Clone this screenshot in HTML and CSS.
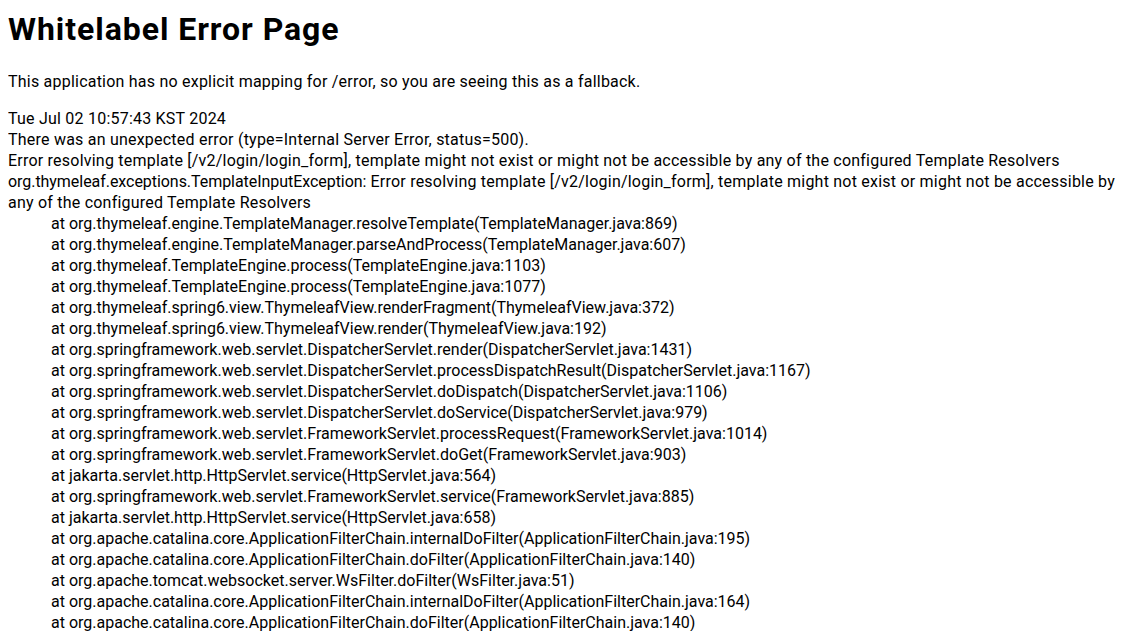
FILE: index.html
```html
<!DOCTYPE html>
<html>
<head>
<meta charset="utf-8">
<title>Whitelabel Error Page</title>
<link rel="stylesheet" href="styles.css">
</head>
<body>
<h1 class="title">Whitelabel Error Page</h1>
<p class="intro">This application has no explicit mapping for /error, so you are seeing this as a fallback.</p>
<div class="line" id="created">Tue Jul 02 10:57:43 KST 2024</div>
<div class="line">There was an unexpected error (type=Internal Server Error, status=500).</div>
<div class="trace"><span class="msg">Error resolving template [/v2/login/login_form], template might not exist or might not be accessible by any of the configured Template Resolvers
<span class="exc">org.thymeleaf.exceptions.TemplateInputException:</span> Error resolving template [/v2/login/login_form], template might not exist or might not be accessible by any of the configured Template Resolvers</span>
<span class="frames">	at org.thymeleaf.engine.TemplateManager.resolveTemplate(TemplateManager.java:869)
	at org.thymeleaf.engine.TemplateManager.parseAndProcess(TemplateManager.java:607)
	at org.thymeleaf.TemplateEngine.process(TemplateEngine.java:1103)
	at org.thymeleaf.TemplateEngine.process(TemplateEngine.java:1077)
	at org.thymeleaf.spring6.view.ThymeleafView.renderFragment(ThymeleafView.java:372)
	at org.thymeleaf.spring6.view.ThymeleafView.render(ThymeleafView.java:192)
	at org.springframework.web.servlet.DispatcherServlet.render(DispatcherServlet.java:1431)
	at org.springframework.web.servlet.DispatcherServlet.processDispatchResult(DispatcherServlet.java:1167)
	at org.springframework.web.servlet.DispatcherServlet.doDispatch(DispatcherServlet.java:1106)
	at org.springframework.web.servlet.DispatcherServlet.doService(DispatcherServlet.java:979)
	at org.springframework.web.servlet.FrameworkServlet.processRequest(FrameworkServlet.java:1014)
	at org.springframework.web.servlet.FrameworkServlet.doGet(FrameworkServlet.java:903)
	at jakarta.servlet.http.HttpServlet.service(HttpServlet.java:564)
	at org.springframework.web.servlet.FrameworkServlet.service(FrameworkServlet.java:885)
	at jakarta.servlet.http.HttpServlet.service(HttpServlet.java:658)
	at org.apache.catalina.core.ApplicationFilterChain.internalDoFilter(ApplicationFilterChain.java:195)
	at org.apache.catalina.core.ApplicationFilterChain.doFilter(ApplicationFilterChain.java:140)
	at org.apache.tomcat.websocket.server.WsFilter.doFilter(WsFilter.java:51)
	at org.apache.catalina.core.ApplicationFilterChain.internalDoFilter(ApplicationFilterChain.java:164)
	at org.apache.catalina.core.ApplicationFilterChain.doFilter(ApplicationFilterChain.java:140)
	at org.springframework.web.filter.RequestContextFilter.doFilterInternal(RequestContextFilter.java:100)
	at org.springframework.web.filter.OncePerRequestFilter.doFilter(OncePerRequestFilter.java:116)
	at org.apache.catalina.core.ApplicationFilterChain.internalDoFilter(ApplicationFilterChain.java:164)
	at org.apache.catalina.core.ApplicationFilterChain.doFilter(ApplicationFilterChain.java:140)</span></div>
</body>
</html>
```
FILE: styles.css
```css
html {
  overflow: hidden;
}

body {
  margin: 8px;
  font-family: Roboto, "Liberation Sans", sans-serif;
  font-size: 16px;
  line-height: 21px;
  letter-spacing: 0.22px;
  color: #000;
  background: #fff;
}

.title {
  margin: 5px 0 26px;
  font-size: 32px;
  line-height: 32px;
  font-weight: 700;
  letter-spacing: 0.95px;
}

.intro {
  margin: 16px 0;
}

.line {
  margin: 0;
}

.trace {
  white-space: pre-wrap;
  tab-size: 43px;
  -moz-tab-size: 43px;
}

.exc {
  letter-spacing: -0.05px;
}

.frames {
  letter-spacing: 0;
}
```
